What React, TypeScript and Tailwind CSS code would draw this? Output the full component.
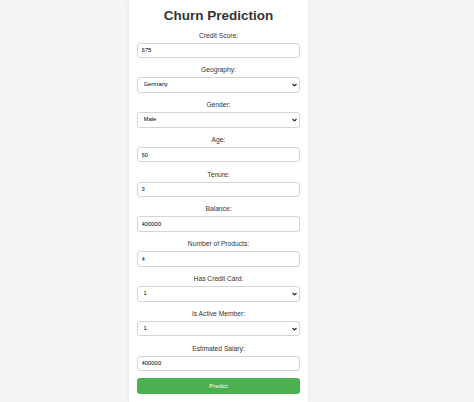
import React from 'react'

type Field = {
  label: string
  value: string
  options?: string[]
}

const fields: Field[] = [
  { label: 'Credit Score:', value: '675' },
  { label: 'Geography:', value: 'Germany', options: ['France', 'Germany', 'Spain'] },
  { label: 'Gender:', value: 'Male', options: ['Male', 'Female'] },
  { label: 'Age:', value: '60' },
  { label: 'Tenure:', value: '3' },
  { label: 'Balance:', value: '400000' },
  { label: 'Number of Products:', value: '4' },
  { label: 'Has Credit Card:', value: '1', options: ['0', '1'] },
  { label: 'Is Active Member:', value: '1', options: ['0', '1'] },
  { label: 'Estimated Salary:', value: '400000' }
]

function Chevron() {
  return (
    <svg
      viewBox="0 0 10 6"
      className="pointer-events-none absolute right-[3px] top-1/2 h-[3px] w-[5px] -translate-y-1/2"
    >
      <path d="M1 1l4 4 4-4" fill="none" stroke="#222" strokeWidth="2.2" />
    </svg>
  )
}

function FormField({ field }: { field: Field }) {
  return (
    <div className="mb-[7.3px] flex flex-col">
      <label className="mb-[3px] block h-[9px] text-center text-[6.7px] leading-[9px] text-[#333]">
        {field.label}
      </label>
      {field.options ? (
        <div className="relative h-[15.5px] leading-none">
          <select
            defaultValue={field.value}
            className="block h-[15.5px] w-full appearance-none rounded-[3px] border border-[#d4d4d4] bg-white pl-[5.5px] text-[5.9px] leading-none text-black outline-none"
          >
            {field.options.map((o) => (
              <option key={o} value={o}>
                {o}
              </option>
            ))}
          </select>
          <Chevron />
        </div>
      ) : (
        <input
          defaultValue={field.value}
          className="block h-[15.5px] w-full rounded-[3px] border border-[#d4d4d4] bg-white pl-[3.5px] text-[5.9px] leading-none text-black outline-none"
        />
      )}
    </div>
  )
}

export default function App() {
  return (
    <div className="h-[402px] overflow-hidden bg-[#f4f4f4] font-['Liberation_Sans',Arial,sans-serif]">
      <div className="ml-[129px] h-full w-[179px] bg-white px-[8px] shadow-[0_0_4px_rgba(0,0,0,0.08)]">
        <h1 className="pt-[7px] pb-[6.5px] text-center text-[13.5px] font-bold leading-[17px] text-[#333]">
          Churn Prediction
        </h1>
        {fields.map((f) => (
          <FormField key={f.label} field={f} />
        ))}
        <button className="mt-[1px] block h-[16px] w-full rounded-[3px] bg-[#4caf50] text-[5.9px] text-white">
          Predict
        </button>
      </div>
    </div>
  )
}
